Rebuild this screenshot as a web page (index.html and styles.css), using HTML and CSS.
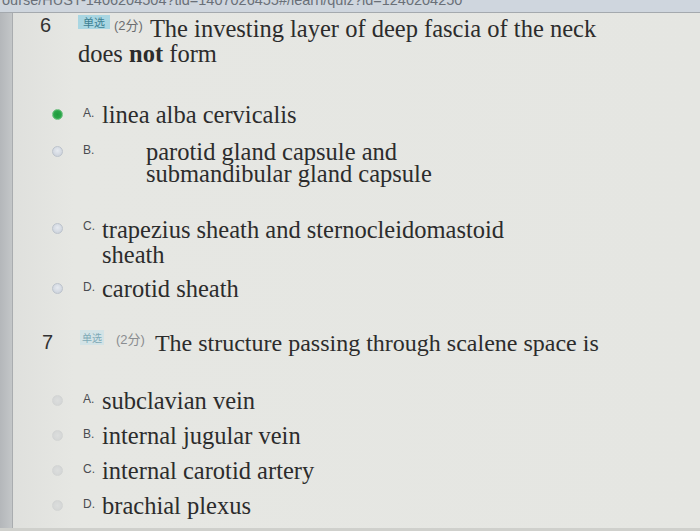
FILE: index.html
```html
<!DOCTYPE html>
<html lang="en">
<head>
<meta charset="utf-8">
<title>Quiz</title>
<link rel="stylesheet" href="styles.css">
</head>
<body>
<div class="screen">
  <div class="urlbar"><span class="url">ourse/HUST-1406204504?tid=1407026455#/learn/quiz?id=1240204250</span></div>
  <div class="page">
    <div class="edge"></div>
    <main class="quiz">
      <section class="q q6">
        <div class="q-head">
          <span class="q-num">6</span>
          <p class="q-title"><span class="tag">单选</span><span class="score">(2分)</span>The investing layer of deep fascia of the neck<br>does <b>not</b> form</p>
        </div>
        <ul class="opts">
          <li class="opt opt-a6"><span class="radio checked"></span><span class="key">A.</span><span class="txt">linea alba cervicalis</span></li>
          <li class="opt opt-b6"><span class="radio"></span><span class="key">B.</span><span class="txt txt-far">parotid gland capsule and<br>submandibular gland capsule</span></li>
          <li class="opt opt-c6"><span class="radio"></span><span class="key">C.</span><span class="txt txt-loose">trapezius sheath and sternocleidomastoid<br>sheath</span></li>
          <li class="opt opt-d6"><span class="radio"></span><span class="key">D.</span><span class="txt">carotid sheath</span></li>
        </ul>
      </section>
      <section class="q q7">
        <div class="q-head">
          <span class="q-num q-num-7">7</span>
          <p class="q-title q-title-7"><span class="tag tag-faint">单选</span><span class="score score-7">(2分)</span>The structure passing through scalene space is</p>
        </div>
        <ul class="opts">
          <li class="opt opt-a7"><span class="radio faint"></span><span class="key">A.</span><span class="txt">subclavian vein</span></li>
          <li class="opt opt-n7"><span class="radio faint"></span><span class="key">B.</span><span class="txt">internal jugular vein</span></li>
          <li class="opt opt-n7"><span class="radio faint"></span><span class="key">C.</span><span class="txt">internal carotid artery</span></li>
          <li class="opt opt-n7"><span class="radio faint"></span><span class="key">D.</span><span class="txt">brachial plexus</span></li>
        </ul>
      </section>
    </main>
  </div>
</div>
</body>
</html>
```
FILE: styles.css
```css
html, body {
  margin: 0;
  padding: 0;
  background: #e3e4e0;
}
.screen {
  width: 700px;
  height: 531px;
  overflow: hidden;
  display: flex;
  flex-direction: column;
  background: #e4e5e1;
}
.urlbar {
  height: 12px;
  flex: none;
  background: #cfd6de;
  border-bottom: 1px solid #a4a9ae;
  overflow: hidden;
}
.url {
  display: block;
  margin-top: -9px;
  font-family: "Liberation Sans", Arial, sans-serif;
  font-size: 14.5px;
  line-height: 18px;
  color: #6a7078;
  white-space: nowrap;
  padding-left: 2px;
}
.page {
  flex: 1;
  display: flex;
  border-bottom: 3px solid #cfd0cc;
}
.edge {
  width: 12px;
  flex: none;
  background: linear-gradient(to right, #b4b7ba, #c3c6c8);
  border-right: 1px solid #a9acaf;
}
.quiz {
  flex: 1;
  padding-left: 27px;
  padding-top: 0;
  color: #2c2c2c;
  font-family: "Liberation Serif", "Times New Roman", serif;
  background: linear-gradient(to right, #dfe0dd 0px, #e6e7e3 60px, #e5e6e2 100%);
}
.q-head {
  display: grid;
  grid-template-columns: 38px 1fr;
  align-items: start;
}
.q-num {
  font-family: "Liberation Sans", Arial, sans-serif;
  font-size: 20px;
  line-height: 25px;
  margin-top: 0;
  color: #333;
}
.q-num-7 {
  margin-top: 3px;
  padding-left: 2px;
}
.q-title {
  margin: 0;
  font-size: 24.5px;
  line-height: 25px;
}
.q-title-7 {
  font-size: 24px;
}
.tag {
  display: inline-block;
  vertical-align: top;
  margin-top: 2px;
  margin-right: 4px;
  padding: 0 5px;
  height: 14px;
  line-height: 14px;
  font-size: 11px;
  font-family: "Noto Sans CJK SC", sans-serif;
  background: #a9d6e2;
  color: #3d7f92;
}
.tag-faint {
  margin-top: 3px;
  margin-left: 2px;
  padding: 0 2px;
  height: 15px;
  line-height: 15px;
  font-size: 10px;
  margin-right: 12px;
  background: #d3e3e6;
  color: #7faab6;
}
.score {
  font-family: "Liberation Sans", "Noto Sans CJK SC", sans-serif;
  font-size: 13px;
  vertical-align: 7px;
  color: #6b6d70;
  margin-right: 7px;
}
.score-7 {
  color: #8a8d90;
  margin-right: 10px;
}
.opts {
  list-style: none;
  margin: 0;
  padding: 0;
}
.opt {
  display: grid;
  grid-template-columns: 11px 39px 1fr;
  align-items: start;
  padding-left: 12px;
  font-size: 24.5px;
  line-height: 22px;
}
.radio {
  width: 9px;
  height: 9px;
  margin-top: 5px;
  border-radius: 50%;
  border: 1px solid #bcc3cc;
  background: radial-gradient(circle at 50% 40%, #e6eaf0 0, #cdd3dc 80%);
}
.radio.checked {
  border-color: #6fc080;
  background: radial-gradient(circle, #1f9a3c 0, #2aa548 55%, #6cc882 100%);
}
.radio.faint {
  border-color: #d3d5d4;
  background: radial-gradient(circle, #dcdedd 0, #d4d6d6 80%);
}
.key {
  padding-left: 20px;
  font-family: "Liberation Sans", Arial, sans-serif;
  font-size: 12px;
  line-height: 19px;
  color: #4a4c50;
}
.txt-far {
  padding-left: 44px;
}
.txt-loose {
  line-height: 25px;
}
.opt-a6 { margin-top: 38px; }
.opt-b6 { margin-top: 15px; }
.opt-c6 { margin-top: 32px; }
.opt-c6 .radio { margin-top: 6px; }
.opt-d6 { margin-top: 11px; }
.q7 { margin-top: 27px; }
.opt-a7 { margin-top: 34px; }
.opt-n7 { margin-top: 13px; }
```
